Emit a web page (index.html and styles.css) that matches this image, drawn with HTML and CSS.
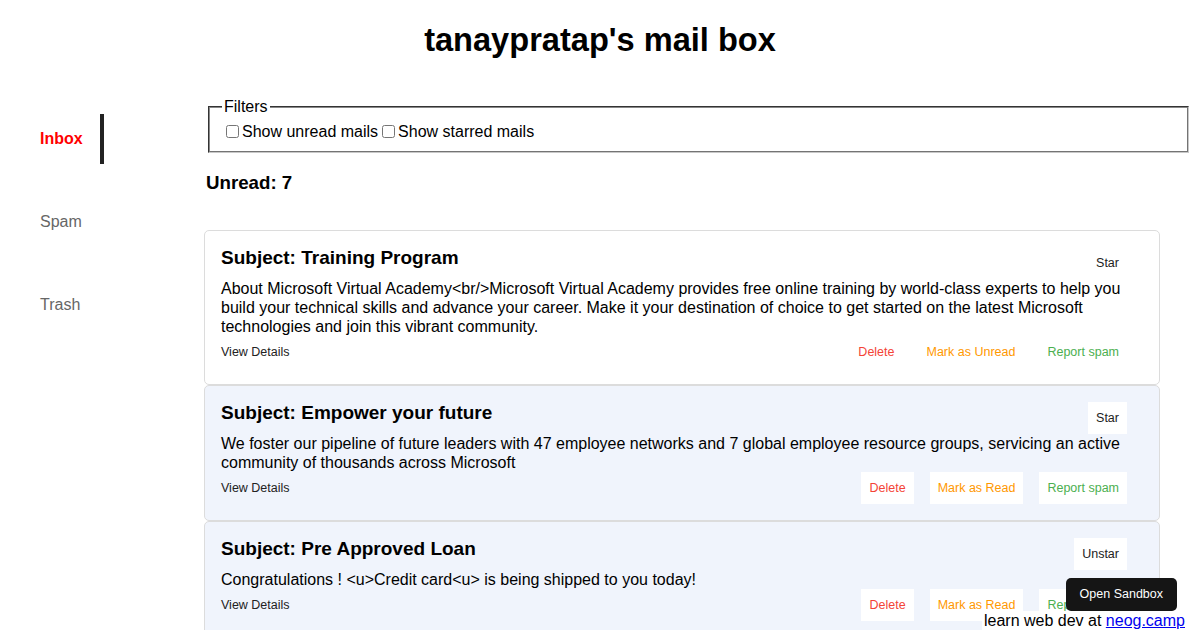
FILE: index.html
```html
<!DOCTYPE html>
<html lang="en">
<head>
<meta charset="utf-8">
<title>Mail box</title>
<link rel="stylesheet" href="styles.css">
</head>
<body>
<h1 class="title">tanaypratap's mail box</h1>
<div class="layout">
  <nav class="sidebar">
    <a class="nav-item active">Inbox</a>
    <a class="nav-item">Spam</a>
    <a class="nav-item">Trash</a>
  </nav>
  <main class="main">
    <fieldset class="filters">
      <legend>Filters</legend>
      <label><input type="checkbox">Show unread mails</label><label><input type="checkbox">Show starred mails</label>
    </fieldset>
    <h3 class="unread">Unread: 7</h3>
    <div class="mail-list">
      <div class="card read">
        <div class="card-head">
          <h3 class="subject">Subject: Training Program</h3>
          <button class="btn">Star</button>
        </div>
        <p class="card-body">About Microsoft Virtual Academy&lt;br/&gt;Microsoft Virtual Academy provides free online training by world-class experts to help you build your technical skills and advance your career. Make it your destination of choice to get started on the latest Microsoft technologies and join this vibrant community.</p>
        <div class="card-foot">
          <button class="btn link">View Details</button>
          <div class="actions">
            <button class="btn danger">Delete</button>
            <button class="btn warn">Mark as Unread</button>
            <button class="btn ok">Report spam</button>
          </div>
        </div>
      </div>
      <div class="card unread-card">
        <div class="card-head">
          <h3 class="subject">Subject: Empower your future</h3>
          <button class="btn">Star</button>
        </div>
        <p class="card-body">We foster our pipeline of future leaders with 47 employee networks and 7 global employee resource groups, servicing an active community of thousands across Microsoft</p>
        <div class="card-foot">
          <button class="btn link">View Details</button>
          <div class="actions">
            <button class="btn danger">Delete</button>
            <button class="btn warn">Mark as Read</button>
            <button class="btn ok">Report spam</button>
          </div>
        </div>
      </div>
      <div class="card unread-card">
        <div class="card-head">
          <h3 class="subject">Subject: Pre Approved Loan</h3>
          <button class="btn">Unstar</button>
        </div>
        <p class="card-body">Congratulations ! &lt;u&gt;Credit card&lt;u&gt; is being shipped to you today!</p>
        <div class="card-foot">
          <button class="btn link">View Details</button>
          <div class="actions">
            <button class="btn danger">Delete</button>
            <button class="btn warn">Mark as Read</button>
            <button class="btn ok">Report spam</button>
          </div>
        </div>
      </div>
    </div>
  </main>
</div>
<div class="sandbox">Open Sandbox</div>
<div class="credit">learn web dev at <a href="#" class="credit-link">neog.camp</a></div>
</body>
</html>
```

FILE: styles.css
```css
html, body {
  margin: 0;
  padding: 0;
  background: #fff;
  font-family: "Liberation Sans", Arial, sans-serif;
  color: #000;
}

.title {
  text-align: center;
  font-size: 32.6px;
  margin: 21.44px 0;
  line-height: 38px;
}

.layout {
  display: flex;
  align-items: flex-start;
}

.sidebar {
  display: flex;
  flex-direction: column;
  gap: 33px;
  padding: 33px 0 0 40px;
  width: 64px;
  flex-shrink: 0;
}

.nav-item {
  display: block;
  padding: 16px 0;
  line-height: 18px;
  font-size: 16px;
  color: #666;
  border-right: 4px solid transparent;
}

.nav-item.active {
  color: #f00;
  font-weight: bold;
  border-right-color: #222;
}

.main {
  margin-left: 100px;
  width: 987px;
  padding-top: 17px;
}

.filters {
  margin: 0 2px 0 4px;
  padding: 6.6px 12px 10px;
  font-size: 16px;
  border: 2px groove #c8c8c8;
  border-top-color: #888;
  border-left-color: #888;
}

.filters label {
  line-height: 18px;
}

.filters input {
  margin: 3px 3px 3px 4px;
  vertical-align: -1px;
}

.unread {
  font-size: 18.72px;
  margin: 18.72px 0 0 2px;
  line-height: 21.5px;
}

.mail-list {
  margin-top: 36px;
  width: 956px;
}

.card {
  border: 1px solid #dcdcdc;
  border-radius: 5px;
  padding: 16px 32px 16px 16px;
  background: #fff;
}

.card.unread-card {
  background: #f0f4fc;
}

.card-head {
  display: flex;
  justify-content: space-between;
  align-items: flex-start;
}

.subject {
  margin: 0;
  font-size: 19px;
  line-height: 22px;
}

.card-body {
  margin: 0;
  font-size: 16px;
  line-height: 19px;
}

.card-foot {
  display: flex;
  justify-content: space-between;
  align-items: center;
}

.actions {
  display: flex;
  gap: 16px;
}

.btn {
  font-family: "Liberation Sans", Arial, sans-serif;
  font-size: 12.5px;
  line-height: 16px;
  padding: 8px;
  border: 0;
  background: #fff;
  color: #222;
  cursor: pointer;
}

.btn.link {
  background: transparent;
  padding: 0;
}

.btn.danger { color: #f44336; }
.btn.warn { color: #ff9800; }
.btn.ok { color: #4caf50; }

.sandbox {
  position: fixed;
  right: 23px;
  bottom: 19px;
  background: #151515;
  color: #fff;
  font-size: 12.5px;
  line-height: 17px;
  padding: 8px 14px;
  border-radius: 5px;
}

.credit {
  position: fixed;
  right: 14px;
  bottom: 0;
  background: #fff;
  font-size: 16px;
  line-height: 19px;
  padding: 0 1px 0 2px;
}

.credit-link {
  color: #00e;
}
```
